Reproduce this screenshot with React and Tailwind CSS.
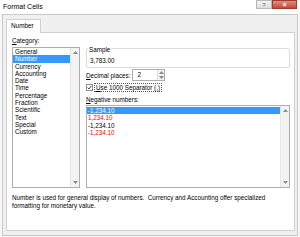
import React from "react";

const categories = [
  "General",
  "Number",
  "Currency",
  "Accounting",
  "Date",
  "Time",
  "Percentage",
  "Fraction",
  "Scientific",
  "Text",
  "Special",
  "Custom",
];

const negatives = [
  { text: "-1,234.10", selected: true },
  { text: "1,234.10", red: true },
  { text: "-1,234.10" },
  { text: "-1,234.10", red: true },
];

function Arrow({ up }) {
  return (
    <svg width="5" height="3" viewBox="0 0 5 3" className="block">
      <path d={up ? "M0 3 L2.5 0 L5 3 Z" : "M0 0 L2.5 3 L5 0 Z"} fill="#8a8a8a" />
    </svg>
  );
}

function ScrollBar() {
  return (
    <div className="w-[9px] h-full bg-[#f2f2f2] border-l border-[#e6e6e6] flex flex-col justify-between items-center py-[3px]">
      <Arrow up />
      <Arrow />
    </div>
  );
}

export default function App() {
  return (
    <div className="w-[300px] h-[237px] bg-[#f7f7f7] overflow-hidden text-black font-['Liberation_Sans',Arial,sans-serif]">
      {/* title bar */}
      <div className="h-[14px] bg-white flex items-start">
        <span className="ml-[3px] mt-[2px] text-[7px] leading-[9px]">Format Cells</span>
        <div className="ml-auto mr-[3px] flex">
          <div className="w-[16px] h-[9px] border border-[#b9b9b9] bg-gradient-to-b from-[#f4f4f4] to-[#dcdcdc] flex items-center justify-center text-[6px] leading-none text-[#666]">
            ?
          </div>
          <div className="w-[25px] h-[9px] bg-gradient-to-b from-[#e08e7c] to-[#c4463a] border border-[#a53a30] flex items-center justify-center text-[7px] leading-none font-bold text-white">
            ×
          </div>
        </div>
      </div>

      {/* dialog body */}
      <div className="mx-[2px] h-[222px] border border-[#c8c8c8] bg-[#f0f0f0] px-[3px] pt-[4px]">
        <div className="w-[35px] h-[14px] border border-b-0 border-[#d0d0d0] bg-white flex items-center pl-[4px] text-[6.4px] leading-none relative z-10">
          Number
        </div>
        <div className="w-[289px] h-[199px] -mt-[1px] border border-[#d0d0d0] bg-white pt-[4px] text-[6.3px]">
          <div className="flex">
            {/* category column */}
            <div className="ml-[5px] w-[68px]">
              <div className="leading-[7px]">
                <span className="underline">C</span>ategory:
              </div>
              <div className="mt-[3px] h-[141px] border border-[#abadb3] flex">
                <div className="flex-1 pt-[0px]">
                  {categories.map((c) => (
                    <div
                      key={c}
                      className={`leading-[7.3px] pl-[2px] ${c === "Number" ? "bg-[#3399ff] text-white" : ""}`}
                    >
                      {c}
                    </div>
                  ))}
                </div>
                <ScrollBar />
              </div>
            </div>

            {/* right column */}
            <div className="ml-[6px] w-[204px]">
              <div className="mt-[11px] h-[20px] border border-[#dcdcdc] rounded-[2px] relative">
                <span className="absolute -top-[3px] left-[1px] bg-white px-[1px] leading-[7px]">Sample</span>
                <div className="pt-[8px] pl-[3px] leading-[7px]">3,783.00</div>
              </div>

              <div className="mt-[1px] h-[12px] flex items-center">
                <span className="leading-[7px]">
                  <span className="underline">D</span>ecimal places:
                </span>
                <div className="ml-[2px] w-[33px] h-[12px] border border-[#abadb3] flex">
                  <span className="flex-1 pl-[4px] leading-[10px]">2</span>
                  <div className="w-[7px] flex flex-col border-l border-[#e0e0e0]">
                    <div className="flex-1 flex items-center justify-center bg-[#eef3f8]">
                      <Arrow up />
                    </div>
                    <div className="flex-1 flex items-center justify-center bg-[#eef3f8]">
                      <Arrow />
                    </div>
                  </div>
                </div>
              </div>

              <div className="mt-[2px] h-[9px] flex items-center">
                <div className="w-[7px] h-[7px] border border-[#8e8f8f] bg-white flex items-center justify-center">
                  <svg width="5" height="5" viewBox="0 0 5 5">
                    <path d="M0.6 2.6 L2 4 L4.4 0.8" stroke="#333" strokeWidth="0.9" fill="none" />
                  </svg>
                </div>
                <span className="ml-[1px] h-[9px] px-[1px] border border-dotted border-[#555] leading-[7px]">
                  <span className="underline">U</span>se 1000 Separator (,)
                </span>
              </div>

              <div className="mt-[4px] leading-[7px]">
                <span className="underline">N</span>egative numbers:
              </div>

              <div className="mt-[2px] h-[83px] border border-[#abadb3] flex">
                <div className="flex-1 pt-[1px]">
                  {negatives.map((n, i) => (
                    <div
                      key={i}
                      className={`leading-[7.3px] pl-[1px] ${
                        n.selected ? "bg-[#3399ff] text-white" : n.red ? "text-[#ff0000]" : ""
                      }`}
                    >
                      {n.text}
                    </div>
                  ))}
                </div>
                <ScrollBar />
              </div>
            </div>
          </div>

          <div className="mt-[6px] ml-[5px] leading-[8px]">
            <div>Number is used for general display of numbers.&nbsp; Currency and Accounting offer specialized</div>
            <div>formatting for monetary value.</div>
          </div>
        </div>
      </div>
    </div>
  );
}
